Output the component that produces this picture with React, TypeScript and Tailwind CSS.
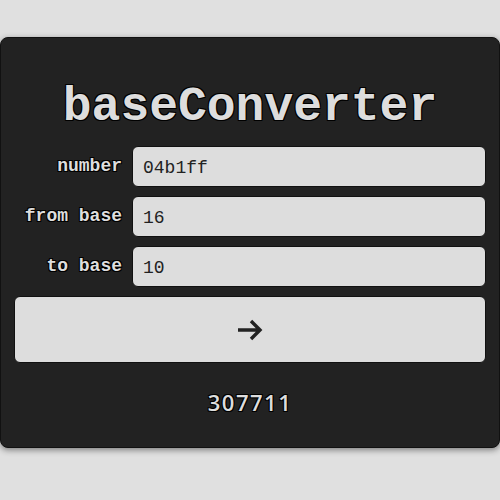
import { useState } from "react";

const outline =
  "[text-shadow:1px_1px_0_#000,-1px_-1px_0_#000,1px_-1px_0_#000,-1px_1px_0_#000]";

function toBase(value: string, from: string, to: string) {
  const n = parseInt(value, Number(from));
  if (Number.isNaN(n)) return "";
  return n.toString(Number(to));
}

function Field({
  label,
  value,
  onChange,
}: {
  label: string;
  value: string;
  onChange: (v: string) => void;
}) {
  return (
    <div className="flex items-center gap-[10px]">
      <label
        className={`w-[108px] shrink-0 text-right text-[18px] font-bold text-[#ddd] ${outline}`}
      >
        {label}
      </label>
      <input
        value={value}
        onChange={(e) => onChange(e.target.value)}
        className="h-[41px] flex-1 rounded-[6px] border border-[#111] bg-[#ddd] px-[10px] pt-[3px] text-[18px] text-[#222] outline-none"
      />
    </div>
  );
}

export default function App() {
  const [num, setNum] = useState("04b1ff");
  const [from, setFrom] = useState("16");
  const [to, setTo] = useState("10");
  const [result, setResult] = useState(toBase("04b1ff", "16", "10"));

  return (
    <div className="min-h-screen bg-[#e0e0e0] pt-[37px] font-['Liberation_Mono',monospace]">
      <div className="rounded-[8px] border border-[#111] bg-[#222] px-[13px] pb-[28px] pt-[45px] shadow-[0_2px_6px_rgba(0,0,0,0.45)]">
        <h1
          className={`text-center text-[48px] font-bold leading-[48px] text-[#ddd] ${outline}`}
        >
          baseConverter
        </h1>

        <div className="mt-[15px] flex flex-col gap-[9px]">
          <Field label="number" value={num} onChange={setNum} />
          <Field label="from base" value={from} onChange={setFrom} />
          <Field label="to base" value={to} onChange={setTo} />
          <button
            onClick={() => setResult(toBase(num, from, to))}
            className="flex h-[67px] w-full items-center justify-center rounded-[6px] border border-[#111] bg-[#ddd]"
          >
            <svg width="28" height="22" viewBox="0 0 28 22" fill="none">
              <path
                d="M2 11h22M15 2l9 9-9 9"
                stroke="#222"
                strokeWidth="3.4"
                strokeLinecap="butt"
                strokeLinejoin="miter"
              />
            </svg>
          </button>
        </div>

        <p
          className={`mt-[23px] text-center font-['Open_Sans',sans-serif] text-[22px] font-semibold tracking-[1.5px] text-[#ddd] ${outline}`}
        >
          {result}
        </p>
      </div>
    </div>
  );
}
